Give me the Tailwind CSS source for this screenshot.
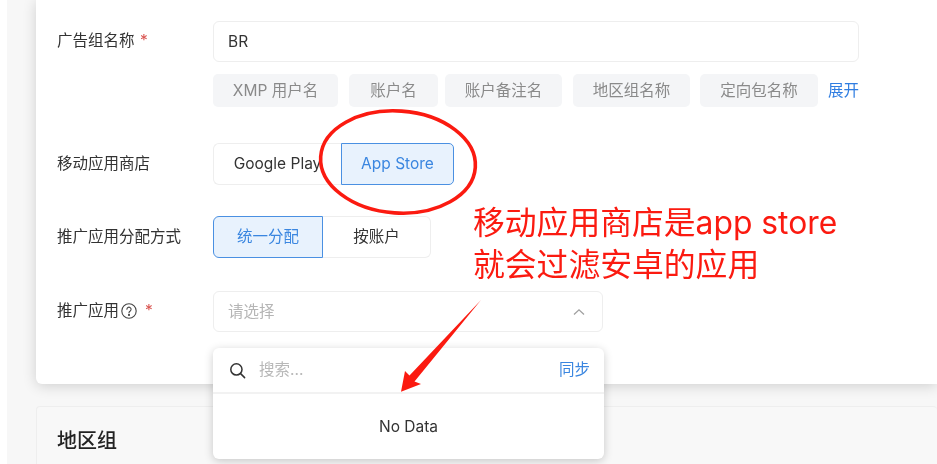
<!DOCTYPE html>
<html lang="zh"><head><meta charset="utf-8">
<script src="https://cdn.jsdelivr.net/npm/@tailwindcss/browser@4"></script>
</head>
<body class="bg-white">
<div class="relative w-[937px] h-[464px] overflow-hidden bg-white font-['Inter','Noto_Sans_CJK_SC',sans-serif] text-[15.5px] text-[#333] blur-[0.5px]">
  <div class="ml-[7px] h-full bg-[#f7f7f7] pl-[29px]">
    <div class="h-[384px] rounded-bl-[6px] bg-white pl-[21px] pt-[21px] shadow-[0_2px_14px_rgba(0,0,0,0.16)]">
      <div class="flex">
        <div class="w-[156px] pt-[10px] leading-[20px]">广告组名称 <span class="ml-[1px] text-[#d9534f]">*</span></div>
        <div>
          <div class="flex h-[41px] w-[646px] items-center rounded-[6px] border border-[#eeeeee] px-[14px] pt-[1px] text-[#333]">BR</div>
          <div class="mt-[12px] flex h-[33px] items-center text-[#8a8a8a]">
            <span class="flex h-full w-[125px] items-center justify-center rounded-[5px] bg-[#f4f5f7]">XMP 用户名</span>
            <span class="ml-[11px] flex h-full w-[89px] items-center justify-center rounded-[5px] bg-[#f4f5f7]">账户名</span>
            <span class="ml-[7px] flex h-full w-[117px] items-center justify-center rounded-[5px] bg-[#f4f5f7]">账户备注名</span>
            <span class="ml-[11px] flex h-full w-[117px] items-center justify-center rounded-[5px] bg-[#f4f5f7]">地区组名称</span>
            <span class="ml-[10px] flex h-full w-[118px] items-center justify-center rounded-[5px] bg-[#f4f5f7]">定向包名称</span>
            <span class="ml-[10px] text-[#2f7de1]">展开</span>
          </div>
        </div>
      </div>
      <div class="mt-[36px] flex items-center">
        <div class="w-[156px]">移动应用商店</div>
        <div class="flex h-[42px]">
          <span class="flex w-[128px] items-center justify-center whitespace-nowrap rounded-l-[6px] border border-r-0 border-[#eeeeee]">Google Play</span>
          <span class="flex w-[113px] items-center justify-center rounded-r-[5px] border border-[#4a90e2] bg-[#e8f2fd] text-[#3a86e0]">App Store</span>
        </div>
      </div>
      <div class="mt-[31px] flex items-center">
        <div class="w-[156px]">推广应用分配方式</div>
        <div class="flex h-[42px]">
          <span class="flex w-[110px] items-center justify-center rounded-l-[6px] border border-[#4a90e2] bg-[#e8f2fd] text-[#3a86e0]">统一分配</span>
          <span class="flex w-[108px] items-center justify-center rounded-r-[6px] border border-l-0 border-[#eeeeee]">按账户</span>
        </div>
      </div>
      <div class="mt-[33px] flex items-center">
        <div class="flex w-[156px] items-center pb-[2px]">推广应用<svg class="ml-[2px] size-[16px]" viewBox="0 0 16 16" fill="none" stroke="#444" stroke-width="1.1"><circle cx="8" cy="8" r="7.2"/><path d="M5.9 6.3a2.1 2.1 0 1 1 3.3 1.7c-.8.5-1.2.9-1.2 1.8" stroke-linecap="round"/><circle cx="8" cy="11.9" r=".5" fill="#444"/></svg><span class="ml-[8px] text-[#d9534f]">*</span></div>
        <div class="flex h-[41px] w-[390px] items-center justify-between rounded-[6px] border border-[#eeeeee] pl-[14px] pr-[17px] text-[#b5b5b5]">请选择<svg class="size-[12px]" viewBox="0 0 12 12" fill="none" stroke="#a0a0a0" stroke-width="1.3"><path d="M1 8.5 6 3.8l5 4.7"/></svg></div>
      </div>
    </div>
    <div class="mt-[22px] h-[80px] rounded-t-[4px] border-t border-l border-[#eeeeee] bg-[#f8f8f8] pl-[20px] pt-[21px] text-[20px] font-medium leading-[26px] text-[#222]">地区组</div>
  </div>

  <div class="absolute left-[213px] top-[348px] h-[111px] w-[391px] rounded-[6px] bg-white shadow-[0_2px_10px_rgba(0,0,0,0.2)]">
    <div class="flex h-[46px] items-center border-b-2 border-[#f2f2f2] pl-[16px] pr-[14px]">
      <svg class="size-[17px]" viewBox="0 0 17 17" fill="none" stroke="#333" stroke-width="1.5"><circle cx="7.4" cy="7.4" r="5.6"/><path d="m11.6 11.6 4 4" stroke-linecap="round"/></svg>
      <span class="ml-[13px] text-[#b8b8b8]">搜索...</span>
      <span class="ml-auto text-[#3a86e0]">同步</span>
    </div>
    <div class="flex h-[65px] items-center justify-center pt-[1px] text-[#333]">No Data</div>
  </div>

  <svg class="absolute left-0 top-0" width="937" height="464" viewBox="0 0 937 464" fill="none">
    <ellipse cx="398" cy="162" rx="77.5" ry="51" transform="rotate(4 398 162)" stroke="#fb1a10" stroke-width="3.6"/>
    <path d="M481 300 414.5 381.5 421 384 401 391.7 405 371 409.5 375.5Z" fill="#fb1a10"/>
  </svg>
  <div class="absolute left-[473px] top-[202px] text-[31.8px] leading-[42px] text-[#fb1a10]">移动应用商店是app store<br>就会过滤安卓的应用</div>
</div>
</body></html>
